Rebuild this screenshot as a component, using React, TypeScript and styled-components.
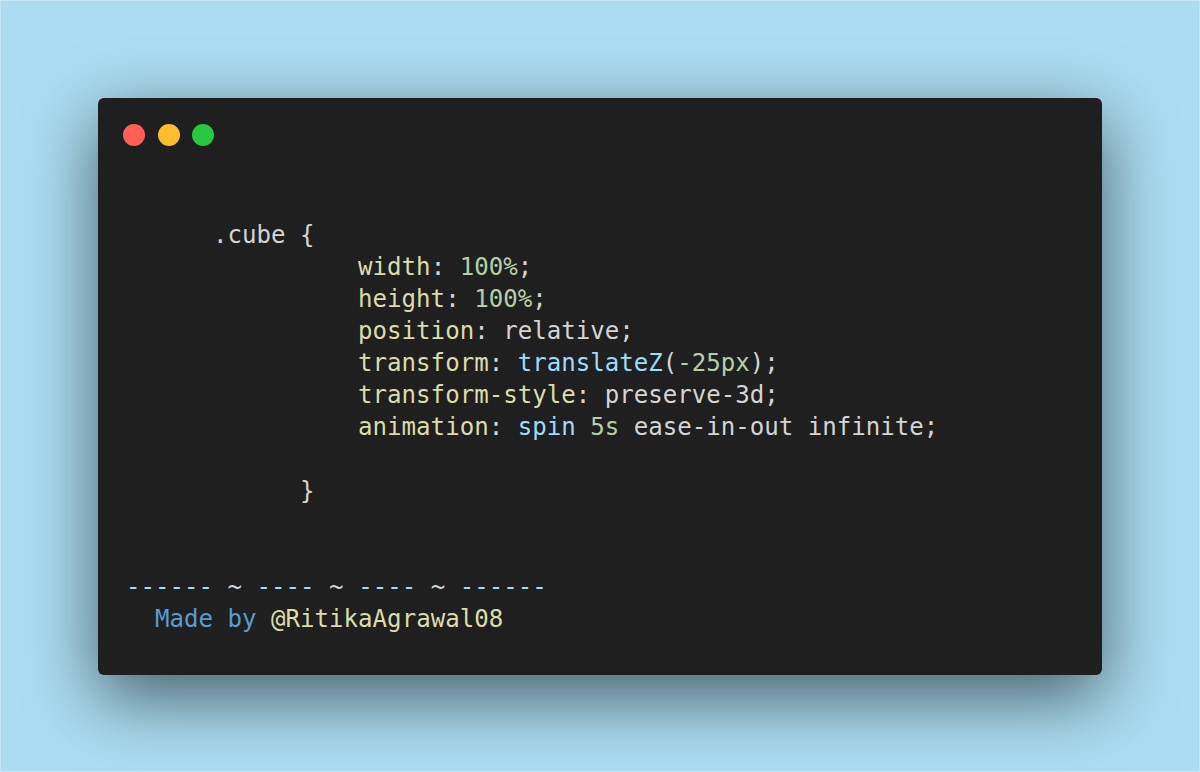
import React from "react";
import styled, { createGlobalStyle } from "styled-components";

const Global = createGlobalStyle`
  html, body { margin: 0; padding: 0; }
  body { background: #abdcf1; }
  #root { min-height: 772px; }
`;

const Page = styled.div`
  box-sizing: border-box;
  width: 1200px;
  height: 772px;
  padding: 98px 98px 0 98px;
  background: #abdcf1;
  border: 1px solid #c4e7f6;
`;

const Window = styled.div`
  box-sizing: border-box;
  width: 1004px;
  height: 577px;
  margin-left: -1px;
  margin-top: -1px;
  background: #1f1f1f;
  border-radius: 6px;
  box-shadow: 0 22px 70px rgba(0, 0, 0, 0.58);
  padding: 26px 28px 0 25px;
  display: flex;
  flex-direction: column;
`;

const Controls = styled.div`
  display: flex;
  gap: 12.5px;
`;

const Dot = styled.span<{ $color: string }>`
  width: 22px;
  height: 22px;
  border-radius: 50%;
  background: ${(p) => p.$color};
`;

const Code = styled.div`
  margin-top: 41px;
  padding-left: 3px;
  font-family: "DejaVu Sans Mono", "Liberation Mono", monospace;
  font-size: 24.1px;
  line-height: 32px;
  color: #d4d4d4;
`;

const Line = styled.div`
  white-space: pre;
  height: 32px;
`;

const palette: Record<string, string> = {
  text: "#d4d4d4",
  prop: "#dcdcaa",
  num: "#b5cea8",
  fn: "#9cdcfe",
  dash: "#9cdcfe",
  key: "#569cd6",
  handle: "#dcdcaa",
};

const Tok = styled.span<{ $kind: string }>`
  color: ${(p) => palette[p.$kind]};
`;

type T = [string, string];
const lines: T[][] = [
  [],
  [["text", "      .cube {"]],
  [["text", "                "], ["prop", "width"], ["text", ": "], ["num", "100%"], ["text", ";"]],
  [["text", "                "], ["prop", "height"], ["text", ": "], ["num", "100%"], ["text", ";"]],
  [["text", "                "], ["prop", "position"], ["text", ": relative;"]],
  [["text", "                "], ["prop", "transform"], ["text", ": "], ["fn", "translateZ"], ["text", "("], ["num", "-25px"], ["text", ");"]],
  [["text", "                "], ["prop", "transform-style"], ["text", ": preserve-3d;"]],
  [["text", "                "], ["prop", "animation"], ["text", ": "], ["fn", "spin"], ["text", " "], ["num", "5s"], ["text", " ease-in-out infinite;"]],
  [],
  [["text", "            }"]],
  [],
  [],
  [["dash", "------"], ["text", " ~ "], ["dash", "----"], ["text", " ~ "], ["dash", "----"], ["text", " ~ "], ["dash", "------"]],
  [["text", "  "], ["key", "Made by"], ["text", " "], ["handle", "@RitikaAgrawal08"]],
];

export default function App() {
  return (
    <>
      <Global />
      <Page>
        <Window>
          <Controls>
            <Dot $color="#ff5f56" />
            <Dot $color="#ffbd2e" />
            <Dot $color="#27c93f" />
          </Controls>
          <Code>
            {lines.map((l, i) => (
              <Line key={i}>
                {l.map(([k, s], j) => (
                  <Tok key={j} $kind={k}>
                    {s}
                  </Tok>
                ))}
              </Line>
            ))}
          </Code>
        </Window>
      </Page>
    </>
  );
}
